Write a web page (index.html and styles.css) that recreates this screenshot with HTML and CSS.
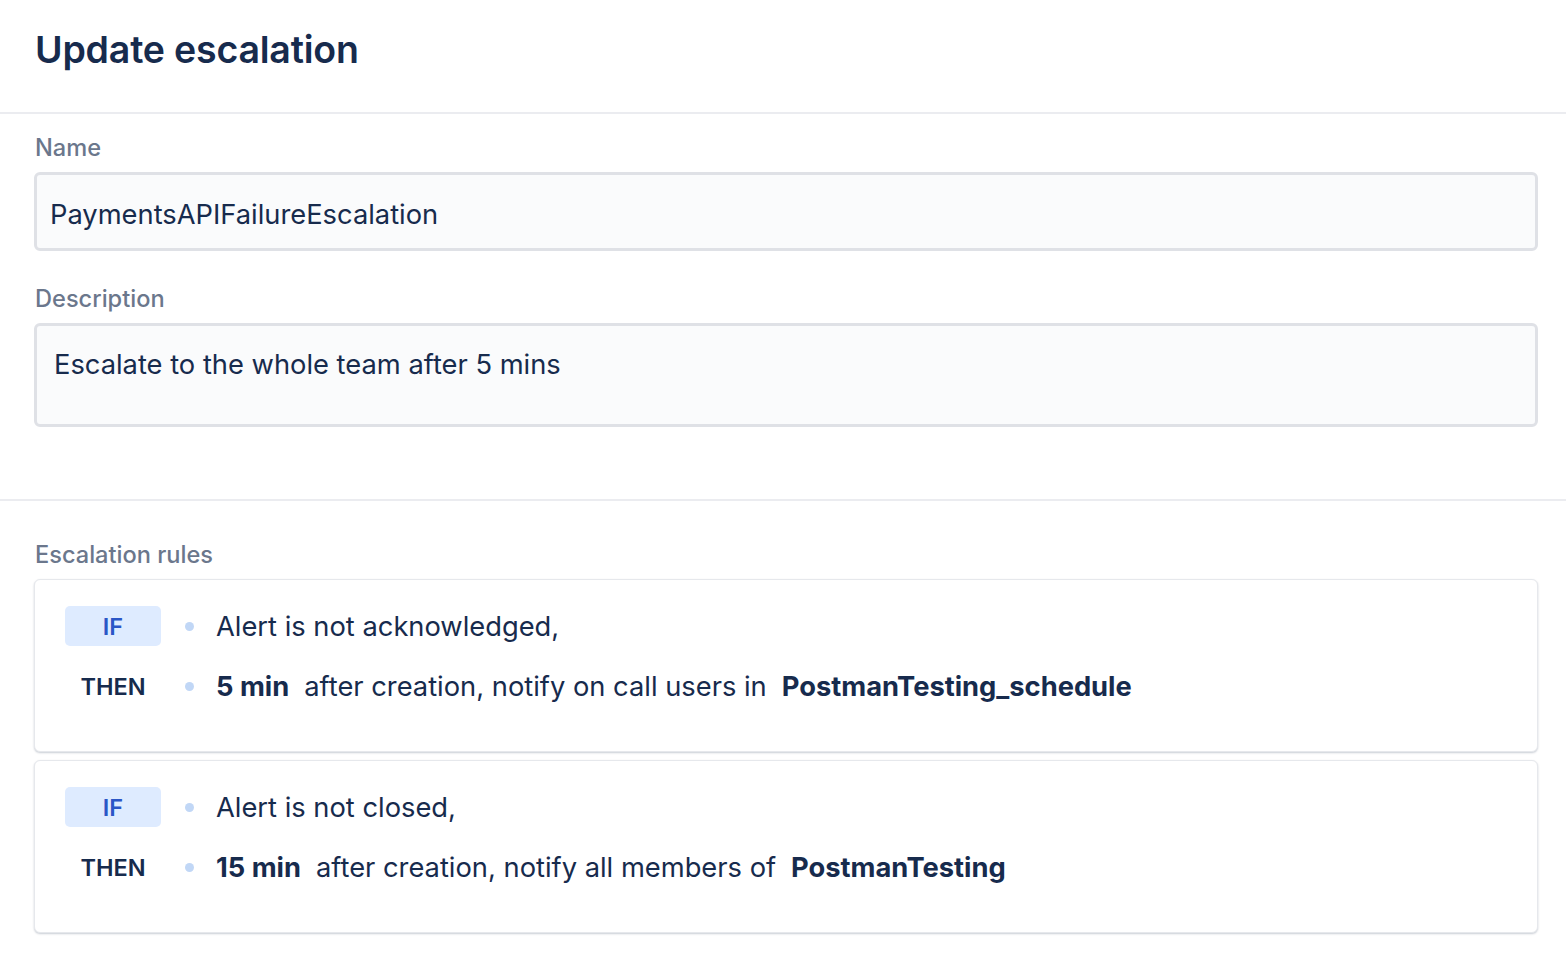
FILE: index.html
```html
<!DOCTYPE html>
<html lang="en">
<head>
<meta charset="utf-8">
<title>Update escalation</title>
<link rel="stylesheet" href="styles.css">
</head>
<body>
<div class="page">
  <header class="header">
    <h1 class="title">Update escalation</h1>
  </header>
  <section class="form">
    <div class="field">
      <label class="label">Name</label>
      <div class="input">PaymentsAPIFailureEscalation</div>
    </div>
    <div class="field">
      <label class="label">Description</label>
      <div class="textarea">Escalate to the whole team after 5 mins</div>
    </div>
  </section>
  <section class="rules">
    <div class="label rules-label">Escalation rules</div>
    <div class="card">
      <div class="row">
        <span class="tag tag-if">IF</span>
        <span class="dot"></span>
        <span class="text">Alert is not acknowledged,</span>
      </div>
      <div class="row">
        <span class="tag tag-then">THEN</span>
        <span class="dot"></span>
        <span class="text"><b class="strong">5 min</b>after creation, notify on call users in<b class="strong strong-end">PostmanTesting_schedule</b></span>
      </div>
    </div>
    <div class="card">
      <div class="row">
        <span class="tag tag-if">IF</span>
        <span class="dot"></span>
        <span class="text">Alert is not closed,</span>
      </div>
      <div class="row">
        <span class="tag tag-then">THEN</span>
        <span class="dot"></span>
        <span class="text"><b class="strong">15 min</b>after creation, notify all members of<b class="strong strong-end">PostmanTesting</b></span>
      </div>
    </div>
  </section>
</div>
</body>
</html>
```

FILE: styles.css
```css
* { box-sizing: border-box; }
html, body { margin: 0; padding: 0; background: #ffffff; }
body {
  font-family: Inter, "Noto Sans", "Liberation Sans", sans-serif;
  color: #172b4d;
}
.page { width: 1566px; }
.header {
  padding: 27px 28px 0 35px;
  height: 114px;
  border-bottom: 2px solid #ebecf0;
}
.title {
  margin: 0;
  font-size: 37.5px;
  line-height: 46px;
  font-weight: 600;
  color: #172b4d;
  letter-spacing: -0.2px;
}
.form {
  padding: 20px 28px 72px 34px;
  border-bottom: 2px solid #ebecf0;
  display: flex;
  flex-direction: column;
  gap: 34px;
}
.field { display: flex; flex-direction: column; gap: 10px; }
.label {
  display: block;
  font-size: 23.6px;
  line-height: 28px;
  font-weight: 500;
  color: #6b778c;
  padding-left: 1px;
}
.input, .textarea {
  background: #fafbfc;
  border: 3px solid #dfe1e6;
  border-radius: 6px;
  font-size: 27.3px;
  color: #172b4d;
}
.input { height: 79px; padding: 5px 13px 0; display: flex; align-items: center; }
.textarea { height: 104px; padding: 22px 17px; line-height: 34px; }
.rules {
  padding: 40px 28px 20px 34px;
  display: flex;
  flex-direction: column;
  gap: 8px;
}
.rules-label { margin-bottom: 2px; }
.card {
  border: 1px solid #e6e8ec;
  border-radius: 6px;
  box-shadow: 0 1px 2px rgba(9, 30, 66, 0.22);
  padding: 26px 30px 45px;
  display: flex;
  flex-direction: column;
  gap: 20px;
  background: #fff;
}
.card + .card { margin-top: 0; }
.row { display: flex; align-items: center; height: 40px; }
.tag {
  width: 96px;
  height: 40px;
  display: flex;
  align-items: center;
  justify-content: center;
  font-size: 23.5px;
  font-weight: 600;
  border-radius: 5px;
}
.tag-if { background: #deebff; color: #2a56c6; }
.tag-then { color: #172b4d; }
.dot {
  width: 9px;
  height: 9px;
  border-radius: 50%;
  background: #c1d7f6;
  margin: 0 22px 0 24px;
}
.text { font-size: 27.3px; color: #172b4d; white-space: nowrap; }
.strong { font-weight: 700; margin-right: 15px; }
.strong-end { margin-right: 0; margin-left: 15px; }
```
